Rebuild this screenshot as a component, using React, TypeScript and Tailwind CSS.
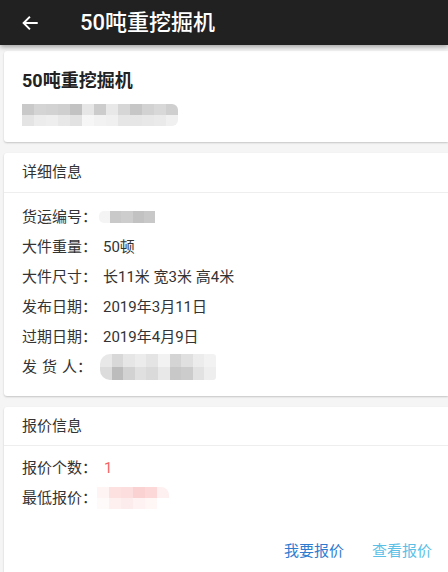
import React from 'react'

const font = { fontFamily: 'Roboto, "Noto Sans CJK SC", sans-serif' }

// pixelated mosaic used where the screenshot has redacted text
function Mosaic({ rows, tile, className = '' }: { rows: string[][]; tile: string; className?: string }) {
  return (
    <div className={`flex flex-col overflow-hidden ${className}`}>
      {rows.map((r, i) => (
        <div key={i} className="flex">
          {r.map((c, j) => (
            <div key={j} className={tile} style={{ backgroundColor: c }} />
          ))}
        </div>
      ))}
    </div>
  )
}

function Row({ label, children }: { label: React.ReactNode; children?: React.ReactNode }) {
  return (
    <div className="flex items-center h-[30px] text-[15px] text-[#333]">
      <span className="w-[81px] shrink-0">{label}</span>
      {children}
    </div>
  )
}

export default function App() {
  return (
    <div className="w-[448px] h-[572px] bg-[#f5f5f5] overflow-hidden relative" style={font}>
      <div className="h-[45px] bg-[#212121] flex items-center relative z-10 shadow-[0_2px_5px_rgba(0,0,0,0.35)]">
        <svg className="ml-[21px] w-[18px] h-[18px]" viewBox="0 0 24 24" fill="none" stroke="white" strokeWidth={2.6} strokeLinecap="square">
          <path d="M21 12H4M11 4.5L3.5 12l7.5 7.5" />
        </svg>
        <span className="ml-[41px] text-white text-[22px] font-medium">50吨重挖掘机</span>
      </div>

      <div className="pt-[6px] pl-[4px] flex flex-col gap-[11px]">
        <div className="bg-white rounded-l-[3px] shadow-[0_1px_2px_rgba(0,0,0,0.2)] h-[91px] px-[18px] pt-[18px]">
          <div className="text-[18px] font-bold text-[#222] leading-[24px]">50吨重挖掘机</div>
          <Mosaic
            className="mt-[11px] w-[156px] rounded-r-[6px]"
            tile="w-[12px] h-[11px]"
            rows={[
              ['#c9c9c9', '#d4d4d4', '#d2d2d2', '#cfcfcf', '#c2c2c2', '#e6e6e6', '#cccccc', '#e8e8e8', '#d6d6d6', '#c6c6c6', '#d2d2d2', '#d8d8d8', '#cfcfcf'],
              ['#e4e4e4', '#ececec', '#eeeeee', '#e8e8e8', '#e2e2e2', '#f6f6f6', '#f2f2f2', '#f0f0f0', '#e6e6e6', '#e6e6e6', '#e8e8e8', '#eaeaea', '#f0f0f0'],
            ]}
          />
        </div>

        <div className="bg-white rounded-l-[3px] shadow-[0_1px_2px_rgba(0,0,0,0.2)] h-[243px]">
          <div className="h-[40px] flex items-center px-[18px] text-[15px] text-[#333] border-b border-[#eeeeee]">详细信息</div>
          <div className="px-[18px] pt-[9px]">
            <Row label="货运编号：">
              <Mosaic
                className="-ml-[4px] w-[56px] rounded-l-[5px]"
                tile="w-[12px] h-[12px]"
                rows={[['#f4f4f4', '#c9c9c9', '#cdcdcd', '#c2c2c2', '#c8c8c8']]}
              />
            </Row>
            <Row label="大件重量：">50顿</Row>
            <Row label="大件尺寸：">长11米 宽3米 高4米</Row>
            <Row label="发布日期：">2019年3月11日</Row>
            <Row label="过期日期：">2019年4月9日</Row>
            <Row label={<span className="flex w-[72px] justify-between pr-[2px]"><span>发</span><span>货</span><span>人：</span></span>}>
              <Mosaic
                className="-ml-[3px] w-[116px] rounded-l-[10px] rounded-r-[3px]"
                tile="w-[12px] h-[13px]"
                rows={[
                  ['#e8e8e8', '#d8d8d8', '#e6e6e6', '#ececec', '#e4e4e4', '#f2f2f2', '#d4d4d4', '#e0e0e0', '#ececec', '#f2f2f2'],
                  ['#dcdcdc', '#bcbcbc', '#d2d2d2', '#e0e0e0', '#dadada', '#e8e8e8', '#c8c8c8', '#cccccc', '#e2e2e2', '#eeeeee'],
                ]}
              />
            </Row>
          </div>
        </div>

        <div className="bg-white rounded-l-[3px] shadow-[0_1px_2px_rgba(0,0,0,0.2)] h-[170px] flex flex-col">
          <div className="h-[39px] flex items-center px-[18px] text-[15px] text-[#333] border-b border-[#eeeeee]">报价信息</div>
          <div className="px-[18px] pt-[7px]">
            <Row label="报价个数：">
              <span className="text-[#f46464] ml-[1px]">1</span>
            </Row>
            <div className="flex items-center h-[30px] text-[15px] text-[#333]">
              <span className="w-[75px] shrink-0">最低报价：</span>
              <Mosaic
                className="w-[72px] rounded-r-[8px]"
                tile="w-[12px] h-[11px]"
                rows={[
                  ['#fff4f4', '#fde0e0', '#fcdede', '#fbd2d2', '#fcd8d8', '#fef0f0'],
                  ['#fffafa', '#fff0f0', '#fdecec', '#fef2f2', '#fff6f6', '#ffffff'],
                ]}
              />
            </div>
          </div>
          <div className="mt-auto mb-[15px] flex justify-end gap-[28px] pr-[16px] text-[15px]">
            <span className="text-[#2f7ccf]">我要报价</span>
            <span className="text-[#5bbfe6]">查看报价</span>
          </div>
        </div>
      </div>
    </div>
  )
}
